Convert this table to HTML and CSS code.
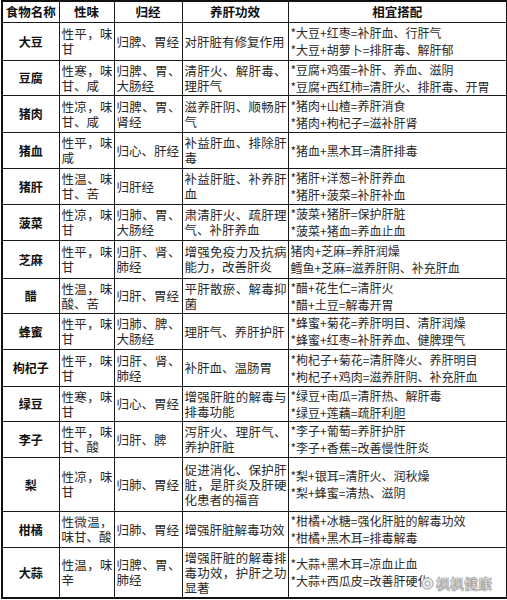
FILE: index.html
```html
<!DOCTYPE html>
<html lang="zh-CN">
<head>
<meta charset="utf-8">
<title>养肝食物</title>
<link rel="stylesheet" href="styles.css">
</head>
<body>
<div class="page">
<table class="tbl">
<colgroup><col class="c1"><col class="c2"><col class="c3"><col class="c4"><col class="c5"></colgroup>
<thead>
<tr class="hd"><th>食物名称</th><th>性味</th><th>归经</th><th>养肝功效</th><th>相宜搭配</th></tr>
</thead>
<tbody>
<tr class="r38"><td class="name">大豆</td><td class="tx">性平，味甘</td><td class="tx">归脾、胃经</td><td class="tx">对肝脏有修复作用</td><td class="mix">*大豆+红枣=补肝血、行肝气<br>*大豆+胡萝卜=排肝毒、解肝郁</td></tr>
<tr class="r35"><td class="name">豆腐</td><td class="tx">性寒，味甘、咸</td><td class="tx">归脾、胃、大肠经</td><td class="tx">清肝火、解肝毒、理肝气</td><td class="mix">*豆腐+鸡蛋=补肝、养血、滋阴<br>*豆腐+西红柿=清肝火、排肝毒、开胃</td></tr>
<tr class="r37"><td class="name">猪肉</td><td class="tx">性凉，味甘、咸</td><td class="tx">归脾、胃、肾经</td><td class="tx">滋养肝阴、顺畅肝气</td><td class="mix">*猪肉+山楂=养肝消食<br>*猪肉+枸杞子=滋补肝肾</td></tr>
<tr class="r36"><td class="name">猪血</td><td class="tx">性平，味咸</td><td class="tx">归心、肝经</td><td class="tx">补益肝血、排除肝毒</td><td class="mix">*猪血+黑木耳=清肝排毒</td></tr>
<tr class="r36"><td class="name">猪肝</td><td class="tx">性温、味甘、苦</td><td class="tx">归肝经</td><td class="tx">补益肝脏、补养肝血</td><td class="mix">*猪肝+洋葱=补肝养血<br>*猪肝+菠菜=补肝补血</td></tr>
<tr class="r36"><td class="name">菠菜</td><td class="tx">性凉，味甘</td><td class="tx">归肺、胃、大肠经</td><td class="tx">肃清肝火、疏肝理气、补肝养血</td><td class="mix">*菠菜+猪肝=保护肝脏<br>*菠菜+猪血=养血止血</td></tr>
<tr class="r38"><td class="name">芝麻</td><td class="tx">性平，味甘</td><td class="tx">归肝、肾、肺经</td><td class="tx">增强免疫力及抗病能力，改善肝炎</td><td class="mix">猪肉+芝麻=养肝润燥<br>鳕鱼+芝麻=滋养肝阴、补充肝血</td></tr>
<tr class="r35"><td class="name">醋</td><td class="tx">性温，味酸、苦</td><td class="tx">归肝、胃经</td><td class="tx">平肝散瘀、解毒抑菌</td><td class="mix">*醋+花生仁=清肝火<br>*醋+土豆=解毒开胃</td></tr>
<tr class="r36"><td class="name">蜂蜜</td><td class="tx">性平，味甘</td><td class="tx">归肺、脾、大肠经</td><td class="tx">理肝气、养肝护肝</td><td class="mix">*蜂蜜+菊花=养肝明目、清肝润燥<br>*蜂蜜+红枣=补肝养血、健脾理气</td></tr>
<tr class="r37"><td class="name">枸杞子</td><td class="tx">性平，味甘</td><td class="tx">归肝、肾、肺经</td><td class="tx">补肝血、温肠胃</td><td class="mix">*枸杞子+菊花=清肝降火、养肝明目<br>*枸杞子+鸡肉=滋养肝阴、补充肝血</td></tr>
<tr class="r35"><td class="name">绿豆</td><td class="tx">性寒，味甘</td><td class="tx">归心、胃经</td><td class="tx">增强肝脏的解毒与排毒功能</td><td class="mix">*绿豆+南瓜=清肝热、解肝毒<br>*绿豆+莲藕=疏肝利胆</td></tr>
<tr class="r36"><td class="name">李子</td><td class="tx">性平，味甘、酸</td><td class="tx">归肝、脾</td><td class="tx">泻肝火、理肝气、养护肝脏</td><td class="mix">*李子+葡萄=养肝护肝<br>*李子+香蕉=改善慢性肝炎</td></tr>
<tr class="r54"><td class="name">梨</td><td class="tx">性凉，味甘</td><td class="tx">归肺、胃经</td><td class="tx">促进消化、保护肝脏，是肝炎及肝硬化患者的福音</td><td class="mix">*梨+银耳=清肝火、润秋燥<br>*梨+蜂蜜=清热、滋阴</td></tr>
<tr class="r36"><td class="name">柑橘</td><td class="tx">性微温，味甘、酸</td><td class="tx">归肺、胃经</td><td class="tx">增强肝脏解毒功效</td><td class="mix">*柑橘+冰糖=强化肝脏的解毒功效<br>*柑橘+黑木耳=排毒解毒</td></tr>
<tr class="r51"><td class="name">大蒜</td><td class="tx">性温，味辛</td><td class="tx">归脾、胃、肺经</td><td class="tx">增强肝脏的解毒排毒功效，护肝之功显著</td><td class="mix">*大蒜+黑木耳=凉血止血<br>*大蒜+西瓜皮=改善肝硬化</td></tr>
</tbody>
</table>
<div class="wm"><svg class="wm-icon" width="13" height="13" viewBox="0 0 13 13"><circle cx="6.5" cy="6.5" r="5.6" fill="#eee" stroke="#9a9a9a" stroke-width="1"/><circle cx="6.5" cy="6.5" r="2.6" fill="none" stroke="#9a9a9a" stroke-width="0.9"/></svg><span class="wm-text">枫枫健康</span></div>
</div>
</body>
</html>
```
FILE: styles.css
```css
html, body {
  margin: 0;
  padding: 0;
  background: #fff;
}
.page {
  position: relative;
  width: 507px;
  height: 600px;
  overflow: hidden;
}
.tbl {
  margin-left: 1px;
  width: 505px;
  table-layout: fixed;
  border-collapse: collapse;
  border: 2px solid #111;
  font-family: "Noto Sans CJK SC", sans-serif;
  color: #2a2a2a;
}
.c1 { width: 57px; }
.c2 { width: 55px; }
.c3 { width: 68px; }
.c4 { width: 106px; }
.c5 { width: 219px; }
.tbl th, .tbl td {
  border: 1px solid #1a1a1a;
  vertical-align: middle;
  padding: 0;
}
.hd { height: 21px; }
.hd th {
  font-size: 12.5px;
  font-weight: 700;
  color: #111;
  line-height: 15px;
  text-align: center;
}
.r35 { height: 35px; }
.r36 { height: 36px; }
.r37 { height: 37px; }
.r38 { height: 38px; }
.r51 { height: 51px; }
.r54 { height: 54px; }
.name {
  font-size: 12px;
  font-weight: 700;
  color: #111;
  text-align: center;
}
.tbl .tx {
  font-size: 12.5px;
  line-height: 15px;
  text-align: justify;
  padding: 0 1px 0 2px;
}
.tbl .mix {
  font-size: 12px;
  line-height: 17px;
  padding: 0 2px;
  white-space: nowrap;
}
.wm {
  position: absolute;
  left: 421px;
  top: 575px;
  display: flex;
  align-items: center;
  gap: 2px;
}
.wm-text {
  font-family: "Noto Sans CJK SC", sans-serif;
  font-size: 14px;
  font-weight: 700;
  line-height: 16px;
  color: #e6e6e6;
  -webkit-text-stroke: 0.6px #9a9a9a;
}
```
